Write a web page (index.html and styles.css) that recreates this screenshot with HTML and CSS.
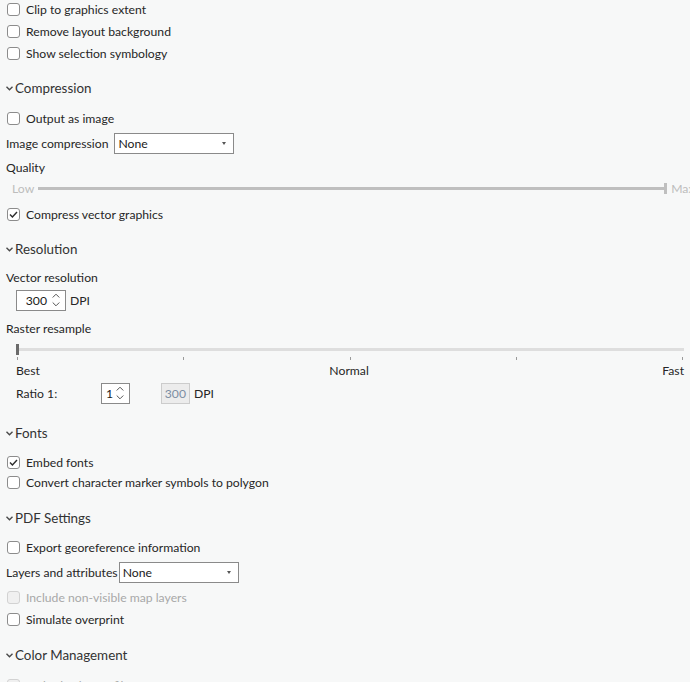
FILE: index.html
```html
<!DOCTYPE html>
<html>
<head>
<meta charset="utf-8">
<link rel="stylesheet" href="styles.css">
</head>
<body>
<div class="viewport">
<div class="content">

  <div class="row check"><span class="box"></span><span>Clip to graphics extent</span></div>
  <div class="row check"><span class="box"></span><span>Remove layout background</span></div>
  <div class="row check"><span class="box"></span><span>Show selection symbology</span></div>

  <div class="header"><svg class="caret" width="7" height="5" viewBox="0 0 7 5"><path d="M0.5 0.8 L3.5 3.8 L6.5 0.8" fill="none" stroke="#4a4a4a" stroke-width="1.4"/></svg><span>Compression</span></div>
  <div class="row check"><span class="box"></span><span>Output as image</span></div>
  <div class="row field"><span class="label">Image compression</span><div class="select w-comp"><span>None</span><span class="tri"></span></div></div>
  <div class="row plain"><span class="label">Quality</span></div>
  <div class="row quality">
    <span class="qlabel">Low</span>
    <div class="qtrack"><span class="qthumb"></span></div>
    <span class="qlabel max">Max</span>
  </div>
  <div class="row check after-slider"><span class="box checked"><svg width="11" height="11" viewBox="0 0 11 11"><path d="M2 5.6 L4.4 8 L9 3" fill="none" stroke="#2b2b2b" stroke-width="1.4"/></svg></span><span>Compress vector graphics</span></div>

  <div class="header"><svg class="caret" width="7" height="5" viewBox="0 0 7 5"><path d="M0.5 0.8 L3.5 3.8 L6.5 0.8" fill="none" stroke="#4a4a4a" stroke-width="1.4"/></svg><span>Resolution</span></div>
  <div class="row plain first-plain"><span class="label">Vector resolution</span></div>
  <div class="row spinrow">
    <div class="spin w-vec"><span class="val">300</span><svg class="arrows" width="8" height="14" viewBox="0 0 8 14"><path d="M0.7 4.5 L4 1.2 L7.3 4.5 M0.7 9.5 L4 12.8 L7.3 9.5" fill="none" stroke="#555" stroke-width="1"/></svg></div>
    <span class="unit">DPI</span>
  </div>
  <div class="row plain gap7"><span class="label">Raster resample</span></div>
  <div class="resample">
    <div class="rtrack"><span class="rthumb"></span></div>
    <div class="ticks"><span></span><span></span><span></span><span></span><span></span></div>
    <div class="rlabels"><span>Best</span><span>Normal</span><span>Fast</span></div>
  </div>
  <div class="row ratio">
    <span class="rlabel">Ratio 1:</span>
    <div class="spin w-ratio"><span class="val left">1</span><svg class="arrows" width="8" height="14" viewBox="0 0 8 14"><path d="M0.7 4.5 L4 1.2 L7.3 4.5 M0.7 9.5 L4 12.8 L7.3 9.5" fill="none" stroke="#555" stroke-width="1"/></svg></div>
    <div class="spin disabled"><span class="val">300</span></div>
    <span class="unit">DPI</span>
  </div>

  <div class="header h-fonts"><svg class="caret" width="7" height="5" viewBox="0 0 7 5"><path d="M0.5 0.8 L3.5 3.8 L6.5 0.8" fill="none" stroke="#4a4a4a" stroke-width="1.4"/></svg><span>Fonts</span></div>
  <div class="row check tight"><span class="box checked"><svg width="11" height="11" viewBox="0 0 11 11"><path d="M2 5.6 L4.4 8 L9 3" fill="none" stroke="#2b2b2b" stroke-width="1.4"/></svg></span><span>Embed fonts</span></div>
  <div class="row check tight"><span class="box"></span><span>Convert character marker symbols to polygon</span></div>

  <div class="header h-pdf"><svg class="caret" width="7" height="5" viewBox="0 0 7 5"><path d="M0.5 0.8 L3.5 3.8 L6.5 0.8" fill="none" stroke="#4a4a4a" stroke-width="1.4"/></svg><span>PDF Settings</span></div>
  <div class="row check pdf-first"><span class="box"></span><span>Export georeference information</span></div>
  <div class="row field"><span class="label">Layers and attributes</span><div class="select w-layers"><span>None</span><span class="tri"></span></div></div>
  <div class="row check disabled-row gap2"><span class="box"></span><span>Include non-visible map layers</span></div>
  <div class="row check"><span class="box"></span><span>Simulate overprint</span></div>

  <div class="header h-color"><svg class="caret" width="7" height="5" viewBox="0 0 7 5"><path d="M0.5 0.8 L3.5 3.8 L6.5 0.8" fill="none" stroke="#4a4a4a" stroke-width="1.4"/></svg><span>Color Management</span></div>
  <div class="row check disabled-row"><span class="box"></span><span>Embed color profile</span></div>

</div>
</div>
</body>
</html>
```

FILE: styles.css
```css
* { box-sizing: border-box; }
html, body {
  margin: 0;
  padding: 0;
  background: #f7f8f8;
}
body {
  font-family: Lato, "Noto Sans", sans-serif;
  font-size: 12.2px;
  color: #262626;
}
.viewport {
  width: 690px;
  height: 682px;
  overflow: hidden;
}
.content {
  margin-top: -2px;
  display: flex;
  flex-direction: column;
}
.row {
  display: flex;
  align-items: center;
  white-space: nowrap;
}
.check { height: 22px; padding-left: 7px; }
.check.tight { height: 20px; }
.box {
  width: 13px;
  height: 13px;
  border: 1px solid #8c8c8c;
  border-radius: 3px;
  background: #ffffff;
  margin-right: 6px;
  flex: none;
  display: flex;
  align-items: center;
  justify-content: center;
}
.disabled-row { color: #a8a8a8; }
.disabled-row .box { border-color: #d2d2d2; background: #f0f0f0; }

.header {
  display: flex;
  align-items: center;
  height: 22px;
  margin-top: 13px;
  margin-bottom: 8px;
  padding-left: 6px;
  font-size: 13.4px;
  color: #333333;
}
.h-fonts { margin-top: 17px; }
.h-pdf { margin-top: 15px; }
.h-color { margin-top: 14px; }
.pdf-first { margin-top: -1px; }
.caret { margin-right: 2px; margin-top: 1px; flex: none; }

.label { padding-left: 6px; }
.plain { height: 20px; margin-top: 2px; }
.first-plain { margin-top: -1px; }
.gap7 { margin-top: 7px; }
.field { height: 24px; margin-top: 2px; }
.select {
  height: 21px;
  border: 1px solid #8a8a8a;
  background: #ffffff;
  margin-left: 3px;
  display: flex;
  align-items: center;
  justify-content: space-between;
  padding: 0 7px 0 3px;
  color: #1a1a1a;
}
.w-comp { width: 120px; margin-left: 6px; }
.w-layers { width: 120px; margin-left: 1px; }
.tri {
  width: 0;
  height: 0;
  border-left: 2.5px solid transparent;
  border-right: 2.5px solid transparent;
  border-top: 3px solid #555;
}

.quality { height: 20px; margin-top: 1px; padding-left: 12px; }
.qlabel { color: #bdbdbd; }
.qtrack {
  flex: none;
  width: 629px;
  height: 3px;
  background: #bfbfbf;
  margin-left: 4px;
  position: relative;
}
.qthumb {
  position: absolute;
  right: 0;
  top: -4px;
  width: 3px;
  height: 11px;
  background: #bfbfbf;
}
.max { margin-left: 4px; }
.after-slider { margin-top: 5px; }

.spinrow { height: 22px; margin-top: 2px; padding-left: 16px; }
.spin {
  height: 21px;
  border: 1px solid #8a8a8a;
  background: #ffffff;
  display: flex;
  align-items: center;
  padding: 0 5px 0 4px;
  color: #1a1a1a;
}
.spin .val { flex: 1; text-align: right; padding-right: 5px; }
.spin .val.left { text-align: left; padding-right: 0; }
.arrows { flex: none; }
.w-vec { width: 50px; }
.unit { margin-left: 4px; }

.resample {
  margin-top: 2px;
  height: 42px;
  padding: 0 6px 0 16px;
  position: relative;
}
.rtrack {
  margin-top: 8px;
  height: 3px;
  background: #dedede;
  position: relative;
}
.rthumb {
  position: absolute;
  left: 0;
  top: -4px;
  width: 3px;
  height: 11px;
  background: #6b6b6b;
}
.ticks {
  margin-top: 6px;
  display: flex;
  justify-content: space-between;
  padding: 0 1px;
}
.ticks span {
  width: 1px;
  height: 3px;
  background: #9a9a9a;
}
.rlabels {
  margin-top: 4px;
  display: flex;
  justify-content: space-between;
  line-height: 14px;
}
.rlabels span:nth-child(2) { margin-left: -4px; }

.ratio { height: 24px; margin-top: -1px; padding-left: 16px; }
.rlabel { width: 85px; }
.w-ratio { width: 29px; padding-left: 4px; }
.spin.disabled {
  width: 29px;
  margin-left: 31px;
  background: #ececec;
  border-color: #cccccc;
  color: #7c8ea3;
  padding: 0 3px 0 0;
}
.spin.disabled .val { padding-right: 0; }
.gap2 { margin-top: 2px; }
```
